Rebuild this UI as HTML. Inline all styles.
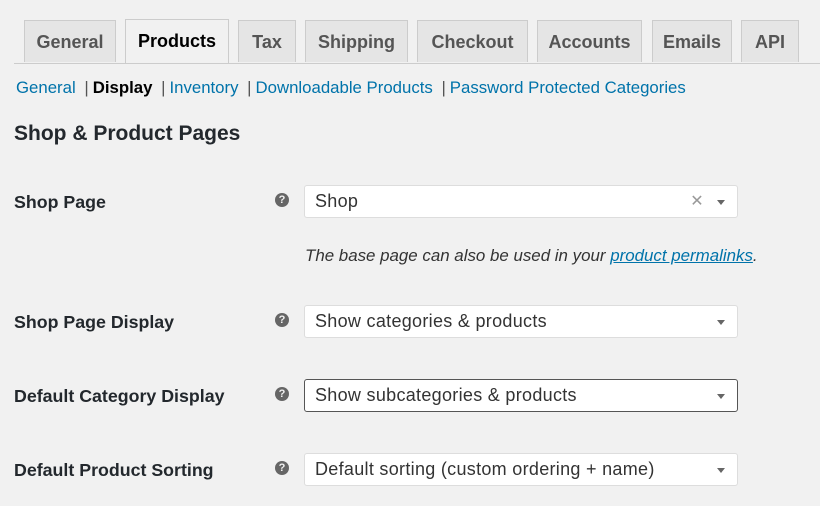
<!DOCTYPE html>
<html><head><style>
body{margin:0;width:820px;height:506px;background:#f1f1f1;font-family:"Liberation Sans",sans-serif;color:#23282d;position:relative;overflow:hidden}
.tab{position:absolute;top:20px;height:42px;background:#e5e5e5;border:1px solid #ccc;border-bottom:none;font-size:18px;font-weight:bold;color:#555;text-align:center;line-height:43px;box-sizing:border-box}
.tab.a{background:#f1f1f1;color:#000;height:44px;top:19px}
.line{position:absolute;left:14px;right:0;top:63px;border-top:1px solid #ccc}
.sub{position:absolute;left:16px;top:78px;font-size:16.8px;color:#0073aa;white-space:nowrap}
.sub b{color:#000}.sub span{color:#555;margin:0 4px}
h2{position:absolute;left:14px;top:122px;margin:0;font-size:21px;font-weight:bold}
.lbl{position:absolute;left:14px;font-size:17.8px;font-weight:bold}
.q{position:absolute;left:275px;width:14px;height:14px;border-radius:50%;background:#666;color:#f1f1f1;font-size:11px;font-weight:bold;text-align:center;line-height:14px}
.sel{position:absolute;left:304px;width:434px;height:33px;background:#fff;border:1px solid #ddd;box-sizing:border-box;border-radius:3px;font-size:18px;letter-spacing:0.3px;line-height:31px;padding-left:10px;color:#333}
.sel:after{content:"";position:absolute;right:12px;top:14px;border:4px solid transparent;border-top:5px solid #666}
.x{position:absolute;right:33px;top:0;color:#999;font-size:16px}
.desc{position:absolute;left:305px;top:246px;font-size:16.9px;font-style:italic;color:#333}
.desc a{color:#0073aa;text-decoration:underline}
</style></head><body>
<div class="line"></div>
<div class="tab" style="left:24px;width:92px">General</div>
<div class="tab a" style="left:125px;width:104px">Products</div>
<div class="tab" style="left:238px;width:58px">Tax</div>
<div class="tab" style="left:305px;width:103px">Shipping</div>
<div class="tab" style="left:417px;width:111px">Checkout</div>
<div class="tab" style="left:537px;width:105px">Accounts</div>
<div class="tab" style="left:652px;width:80px">Emails</div>
<div class="tab" style="left:741px;width:58px">API</div>
<div class="sub">General <span>|</span><b>Display</b> <span>|</span>Inventory <span>|</span>Downloadable Products <span>|</span>Password Protected Categories</div>
<h2>Shop &amp; Product Pages</h2>
<div class="lbl" style="top:192px">Shop Page</div>
<div class="q" style="top:193px">?</div>
<div class="sel" style="top:185px">Shop<span class="x">✕</span></div>
<div class="desc">The base page can also be used in your <a>product permalinks</a>.</div>
<div class="lbl" style="top:312px">Shop Page Display</div>
<div class="q" style="top:313px">?</div>
<div class="sel" style="top:305px">Show categories &amp; products</div>
<div class="lbl" style="top:386px">Default Category Display</div>
<div class="q" style="top:387px">?</div>
<div class="sel" style="top:379px;border-color:#555">Show subcategories &amp; products</div>
<div class="lbl" style="top:460px">Default Product Sorting</div>
<div class="q" style="top:461px">?</div>
<div class="sel" style="top:453px">Default sorting (custom ordering + name)</div>
</body></html>
